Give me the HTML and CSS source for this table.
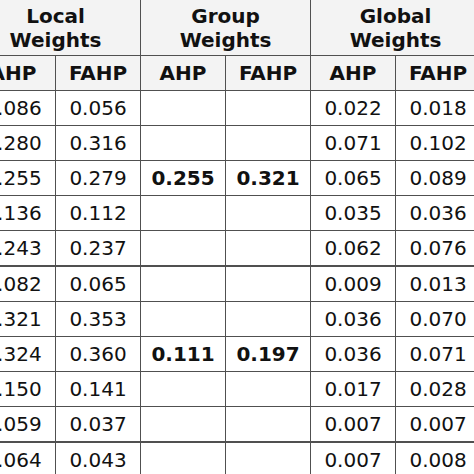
FILE: index.html
```html
<!DOCTYPE html>
<html>
<head>
<meta charset="utf-8">
<link rel="stylesheet" href="styles.css">
</head>
<body>
<table class="weights">
  <colgroup>
    <col class="c"><col class="c"><col class="c"><col class="c"><col class="c"><col class="c">
  </colgroup>
  <thead>
    <tr class="h1">
      <th colspan="2">Local<br>Weights</th>
      <th colspan="2">Group<br>Weights</th>
      <th colspan="2">Global<br>Weights</th>
    </tr>
    <tr class="h2">
      <th>AHP</th><th>FAHP</th><th>AHP</th><th>FAHP</th><th>AHP</th><th>FAHP</th>
    </tr>
  </thead>
  <tbody>
    <tr><td>0.086</td><td>0.056</td><td></td><td></td><td>0.022</td><td>0.018</td></tr>
    <tr><td>0.280</td><td>0.316</td><td></td><td></td><td>0.071</td><td>0.102</td></tr>
    <tr><td>0.255</td><td>0.279</td><td class="b">0.255</td><td class="b">0.321</td><td>0.065</td><td>0.089</td></tr>
    <tr><td>0.136</td><td>0.112</td><td></td><td></td><td>0.035</td><td>0.036</td></tr>
    <tr><td>0.243</td><td>0.237</td><td></td><td></td><td>0.062</td><td>0.076</td></tr>
    <tr class="grp"><td>0.082</td><td>0.065</td><td></td><td></td><td>0.009</td><td>0.013</td></tr>
    <tr><td>0.321</td><td>0.353</td><td></td><td></td><td>0.036</td><td>0.070</td></tr>
    <tr><td>0.324</td><td>0.360</td><td class="b">0.111</td><td class="b">0.197</td><td>0.036</td><td>0.071</td></tr>
    <tr><td>0.150</td><td>0.141</td><td></td><td></td><td>0.017</td><td>0.028</td></tr>
    <tr><td>0.059</td><td>0.037</td><td></td><td></td><td>0.007</td><td>0.007</td></tr>
    <tr class="grp"><td>0.064</td><td>0.043</td><td></td><td></td><td>0.007</td><td>0.008</td></tr>
  </tbody>
</table>
</body>
</html>
```

FILE: styles.css
```css
html, body {
  margin: 0;
  padding: 0;
  background: #ffffff;
  overflow: hidden;
}
body {
  font-family: "DejaVu Sans", Verdana, sans-serif;
  color: #111111;
}
.weights {
  border-collapse: collapse;
  table-layout: fixed;
  width: 510px;
  margin-left: -30px;
  margin-top: -1px;
}
.weights col.c {
  width: 85px;
}
.weights th,
.weights td {
  border: 1px solid #505050;
  padding: 0;
  text-align: center;
  vertical-align: middle;
  white-space: nowrap;
  overflow: hidden;
}
.weights th {
  background: #f3f3f3;
  font-weight: bold;
  font-size: 20px;
  line-height: 24px;
}
.weights tr.h1 th {
  height: 55px;
}
.weights tr.h2 th {
  height: 34px;
}
.weights td {
  font-size: 20px;
  height: 34px;
  background: #ffffff;
}
.weights td.b {
  font-weight: bold;
}
.weights tr.grp td {
  border-top: 2px solid #505050;
}
```
